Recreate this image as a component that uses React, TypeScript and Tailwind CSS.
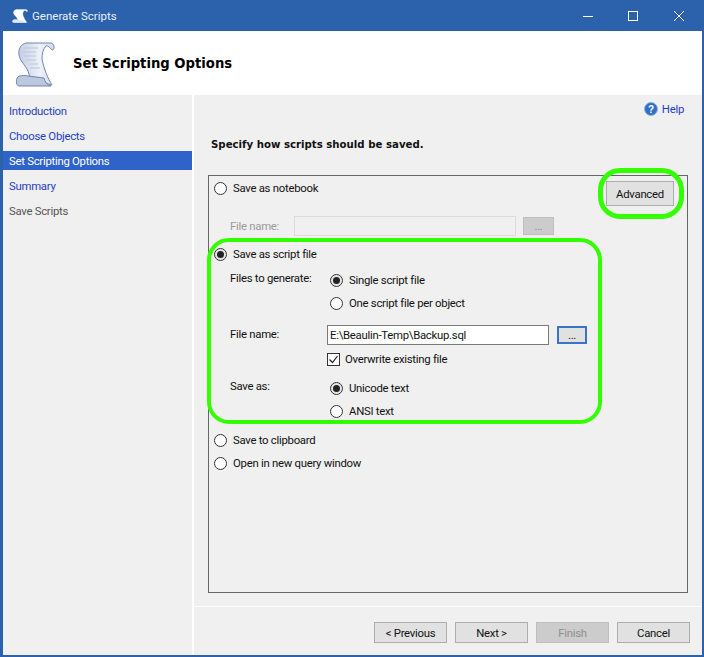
import type { ReactNode } from "react";

const font = "font-['Roboto','Open_Sans',sans-serif] text-[11.35px] tracking-[-0.27px] leading-[16px]";

function ScrollIcon({ className, light }: { className: string; light?: boolean }) {
  const stroke = light ? "#ffffff" : "#7485ad";
  const fill = light ? "#ffffff" : "url(#scrollBody)";
  const shade = light ? "#dfe7f3" : "#bcc7e0";
  return (
    <svg viewBox="0 0 40 46" preserveAspectRatio="none" className={className}>
      <defs>
        <linearGradient id="scrollBody" x1="0" y1="0" x2="1" y2="0">
          <stop offset="0" stopColor="#c3cee6" />
          <stop offset="0.6" stopColor="#eef1f8" />
          <stop offset="1" stopColor="#d3daeb" />
        </linearGradient>
      </defs>
      <path d="M11 2 C6 3 3 8 4 14 C5 21 12 25 14 33 L15 38 L37 44 C33 38 29 28 27 18 C27 13 28 8 31 5 C33 4 35 7 37 9 C40 9 40 3 36 2 Z" fill={fill} stroke={stroke} strokeWidth="1" />
      <path d="M2 37 C1 41 1 44 4 45 L36 45 C32 44 30 41 29 37 L13 35 C9 34 4 34 2 37 Z" fill={shade} stroke={stroke} strokeWidth="1" />
      {!light && (
        <path d="M9 7 H23 M8 11 H21 M9 15 H21 M11 19 H21 M14 23 H23 M15 27 H25" stroke="#bcc5da" strokeWidth="1.2" fill="none" />
      )}
    </svg>
  );
}

function Radio({ checked, children, className = "" }: { checked?: boolean; children: ReactNode; className?: string }) {
  return (
    <div className={`flex items-center gap-[6px] h-[16px] ${className}`}>
      <span className={`w-[13px] h-[13px] rounded-full border border-[#333333] flex items-center justify-center shrink-0 ${checked ? "bg-[#e6e6e6]" : "bg-white"}`}>
        {checked && <span className="w-[7px] h-[7px] rounded-full bg-[#222222]" />}
      </span>
      <span className="whitespace-nowrap text-[#111111]">{children}</span>
    </div>
  );
}

function FooterButton({ children, disabled }: { children: ReactNode; disabled?: boolean }) {
  return (
    <button className={`w-[73px] h-[21px] border flex items-center justify-center ${disabled ? "bg-[#cccccc] border-[#bfbfbf] text-[#8f8f8f]" : "bg-[#e1e1e1] border-[#adadad] text-[#111111]"}`}>
      {children}
    </button>
  );
}

export default function App() {
  return (
    <div className={`relative w-[704px] h-[657px] bg-[#2b62ab] pl-[3px] pr-[2px] pb-[2px] flex flex-col overflow-hidden ${font}`}>
      {/* title bar */}
      <div className="h-[31px] flex items-center shrink-0 text-[#e8eef7]">
        <ScrollIcon className="w-[16px] h-[14px] ml-[9px]" light />
        <span className="ml-[4px] text-[11.5px] tracking-normal">Generate Scripts</span>
        <div className="ml-auto flex items-center gap-[35px] mr-[18px]">
          <svg width="10" height="10" viewBox="0 0 10 10"><path d="M0 5.5 H10" stroke="#fff" /></svg>
          <svg width="10" height="10" viewBox="0 0 10 10"><rect x="0.5" y="0.5" width="9" height="9" fill="none" stroke="#fff" /></svg>
          <svg width="10" height="10" viewBox="0 0 10 10" className="ml-px"><path d="M0 0 L10 10 M10 0 L0 10" stroke="#fff" /></svg>
        </div>
      </div>

      {/* header */}
      <div className="h-[64px] bg-white flex items-center shrink-0">
        <ScrollIcon className="w-[40px] h-[46px] ml-[12px] mt-[1px]" />
        <h1 className="ml-[18px] mt-[2px] font-['DejaVu_Sans',sans-serif] font-bold tracking-normal text-[13.2px] text-black">Set Scripting Options</h1>
      </div>

      <div className="flex flex-1 min-h-0 bg-[#f0f0f0]">
        {/* sidebar */}
        <div className="w-[189px] shrink-0 pt-[6px] text-[#1f3fc4]">
          <div className="h-[19px] mb-[6px] pl-[6px] flex items-center">Introduction</div>
          <div className="h-[19px] mb-[6px] pl-[6px] flex items-center">Choose Objects</div>
          <div className="h-[19px] mb-[6px] pl-[6px] flex items-center bg-[#3063c9] text-white">Set Scripting Options</div>
          <div className="h-[19px] mb-[6px] pl-[6px] flex items-center">Summary</div>
          <div className="h-[19px] mb-[6px] pl-[6px] flex items-center text-[#555555]">Save Scripts</div>
        </div>
        <div className="w-[2px] bg-white shrink-0" />

        {/* main */}
        <div className="flex-1 flex flex-col min-w-0">
          <div className="h-[22px] mt-[3px] flex items-center justify-end pr-[18px] gap-[4px] text-[#1f3fc4]">
            <svg width="14" height="14" viewBox="0 0 14 14">
              <circle cx="7" cy="7" r="6.5" fill="#2f6fc4" stroke="#8fb0dd" />
              <text x="7" y="10.5" textAnchor="middle" fontSize="10" fontWeight="700" fill="#ffffff" fontFamily="Liberation Sans">?</text>
            </svg>
            <span>Help</span>
          </div>
          <h2 className="ml-[17px] mt-[17px] font-['DejaVu_Sans',sans-serif] font-bold tracking-normal text-[10.2px] text-[#111111]">Specify how scripts should be saved.</h2>

          {/* options group */}
          <div className="ml-[14px] mr-[14px] mt-[22px] h-[418px] border border-[#666666] pl-[5px] pr-[13px] shrink-0">
            <div className="flex justify-between items-start mt-[5px]">
              <Radio className="mt-[-1px]">Save as notebook</Radio>
              <button className="w-[68px] h-[25px] bg-[#e1e1e1] border border-[#adadad] text-[#111111]">Advanced</button>
            </div>
            <div className="flex items-center mt-[10px] text-[#9a9a9a]">
              <span className="ml-[16px] w-[64px]">File name:</span>
              <span className="w-[222px] h-[20px] border border-[#dcdcdc] bg-[#f0f0f0]" />
              <span className="ml-[7px] w-[31px] h-[18px] bg-[#cccccc] border border-[#bfbfbf] flex items-center justify-center text-[#8f8f8f]">...</span>
            </div>

            <Radio checked className="mt-[10px]">Save as script file</Radio>
            <div className="ml-[16px] mt-[8px] grid grid-cols-[100px_1fr]">
              <span className="mt-[1px] text-[#111111] leading-[14px]">Files to generate:</span>
              <div className="flex flex-col gap-[7px] mt-[2px]">
                <Radio checked>Single script file</Radio>
                <Radio>One script file per object</Radio>
              </div>
              <span className="mt-[15px] text-[#111111]">File name:</span>
              <div className="mt-[14px] ml-[-3px]">
                <div className="flex items-center">
                  <span className="w-[222px] h-[20px] border border-[#7a7a7a] bg-white pl-[2px] flex items-center text-[#111111]">E:\Beaulin-Temp\Backup.sql</span>
                  <span className="ml-[8px] w-[30px] h-[18px] bg-[#e1e1e1] border-2 border-[#3a73c8] flex items-center justify-center text-[#111111]">...</span>
                </div>
                <div className="flex items-center gap-[5px] mt-[6px] h-[16px] text-[#111111]">
                  <span className="w-[13px] h-[13px] border border-[#333333] bg-white flex items-center justify-center">
                    <svg width="11" height="11" viewBox="0 0 11 11"><path d="M1.5 5.5 L4.5 8.5 L9.5 2" fill="none" stroke="#222222" strokeWidth="1.2" /></svg>
                  </span>
                  <span>Overwrite existing file</span>
                </div>
              </div>
              <span className="mt-[11px] text-[#111111]">Save as:</span>
              <div className="flex flex-col gap-[7px] mt-[13px]">
                <Radio checked>Unicode text</Radio>
                <Radio>ANSI text</Radio>
              </div>
            </div>
            <Radio className="mt-[13px]">Save to clipboard</Radio>
            <Radio className="mt-[7px]">Open in new query window</Radio>
          </div>

          {/* footer */}
          <div className="mt-[13px] h-px bg-white shrink-0" />
          <div className="mt-[15px] pr-[12px] flex justify-end gap-[8px]">
            <FooterButton>&lt; Previous</FooterButton>
            <FooterButton>Next &gt;</FooterButton>
            <FooterButton disabled>Finish</FooterButton>
            <FooterButton>Cancel</FooterButton>
          </div>
        </div>
      </div>

      {/* green highlights drawn over the dialog */}
      <div className="absolute left-[598px] top-[168px] w-[86px] h-[51px] border-[5px] border-[#33ff00] rounded-[22px] pointer-events-none" />
      <div className="absolute left-[207px] top-[238px] w-[395px] h-[186px] border-[4px] border-[#33ff00] rounded-[22px] pointer-events-none" />
    </div>
  );
}
